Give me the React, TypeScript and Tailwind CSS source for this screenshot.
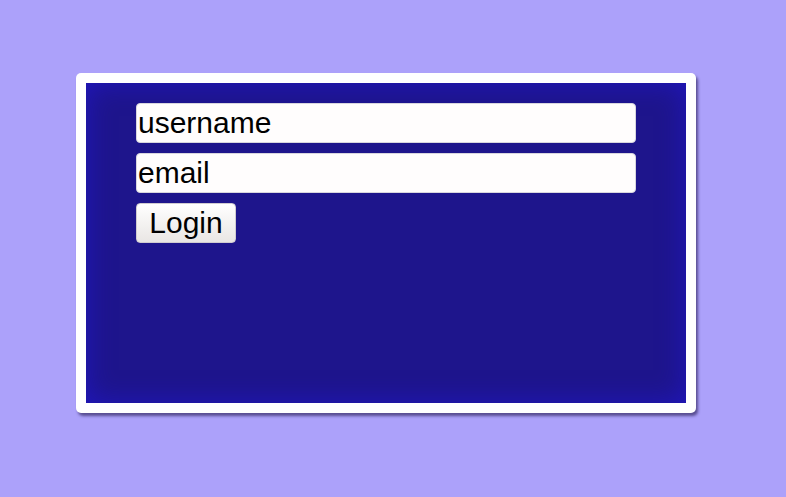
export default function App() {
  return (
    <div className="min-h-[497px] w-full bg-[#aca1fa] pt-[73px] pl-[76px]" style={{ fontFamily: '"Liberation Sans", Arial, sans-serif' }}>
      <div className="w-[620px] rounded-[5px] bg-white p-[10px] shadow-[2px_3px_3px_rgba(60,50,110,0.75)]">
        <div className="h-[320px] bg-[#1e158c] px-[50px] pt-[20px] shadow-[inset_0_0_28px_rgba(32,22,190,1)]">
          <div className="flex flex-col gap-[10px]">
            <input
              className="h-[40px] w-[500px] rounded-[4px] border border-[#d8d6de] bg-[#fffdfd] px-[1px] text-[30px] leading-none text-black outline-none placeholder:text-black"
              placeholder="username"
            />
            <input
              className="h-[40px] w-[500px] rounded-[4px] border border-[#d8d6de] bg-[#fffdfd] px-[1px] text-[30px] leading-none text-black outline-none placeholder:text-black"
              placeholder="email"
            />
            <button className="h-[40px] w-[100px] rounded-[4px] border border-[#d0ccd0] bg-gradient-to-b from-white to-[#e9e6e4] text-[30px] leading-none text-black">
              Login
            </button>
          </div>
        </div>
      </div>
    </div>
  );
}
